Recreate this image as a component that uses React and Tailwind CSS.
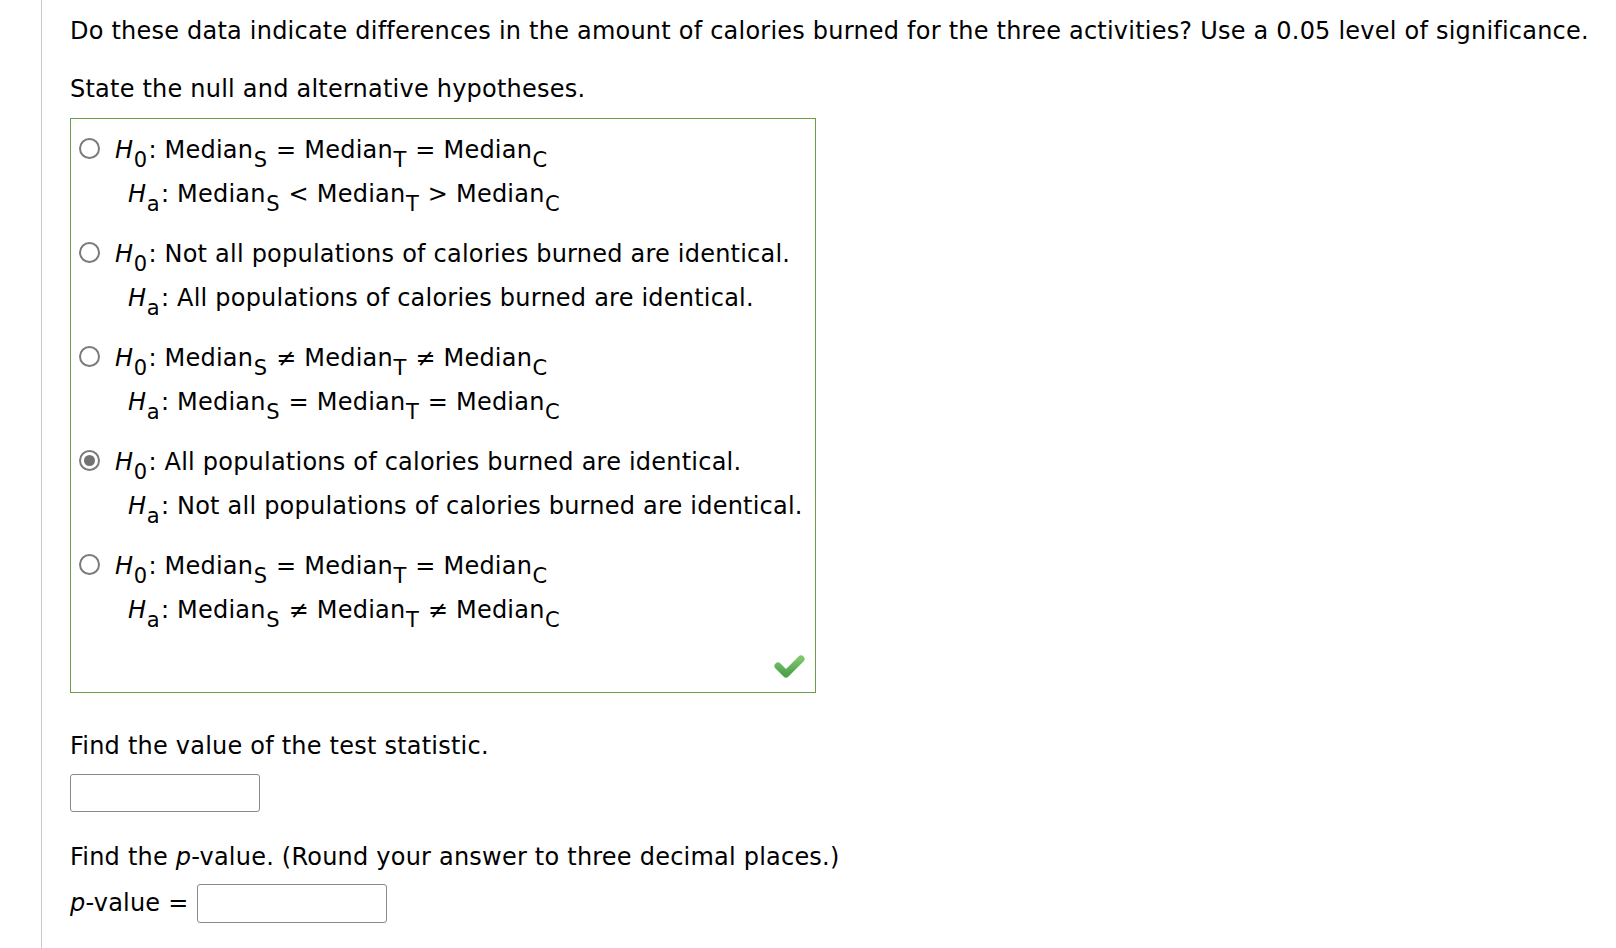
import React, { useState } from 'react';

const font = { fontFamily: '"DejaVu Sans", Verdana, sans-serif' };

// small helpers for the math bits
const Sub = ({ children }) => (
  <span className="relative top-[9px] text-[21px] leading-none ml-[0.5px] mr-[1px]">{children}</span>
);
const H0 = () => (
  <>
    <i>H</i>
    <Sub>0</Sub>:
  </>
);
const Ha = () => (
  <>
    <i>H</i>
    <Sub>a</Sub>:
  </>
);
const Med = ({ s }) => (
  <>
    Median<Sub>{s}</Sub>
  </>
);

const Radio = ({ checked }) => (
  <div className="mt-[2px] ml-[8px] w-[21px] h-[21px] shrink-0 rounded-full border-2 border-[#7b7b7b] bg-white flex items-center justify-center">
    {checked && <div className="w-[11px] h-[11px] rounded-full bg-[#737373]" />}
  </div>
);

const Option = ({ checked, onPick, h0, ha, first }) => (
  <div className={`flex items-start cursor-pointer ${first ? '' : 'mt-[31px]'}`} onClick={onPick}>
    <Radio checked={checked} />
    <div className="ml-[15px]">
      <div className="h-[29px] leading-[29px] whitespace-nowrap">{h0}</div>
      <div className="h-[29px] leading-[29px] mt-[15px] ml-[13px] whitespace-nowrap">{ha}</div>
    </div>
  </div>
);

const CheckMark = () => (
  <svg width="32" height="28" viewBox="0 0 32 28">
    <defs>
      <linearGradient id="gk" x1="0" y1="0" x2="0" y2="1">
        <stop offset="0" stopColor="#7cc56d" />
        <stop offset="1" stopColor="#4da24a" />
      </linearGradient>
    </defs>
    <polyline
      points="4,14 12,22 27,7"
      fill="none"
      stroke="url(#gk)"
      strokeWidth="7"
      strokeLinejoin="round"
      strokeLinecap="round"
    />
  </svg>
);

export default function App() {
  const [picked, setPicked] = useState(3);

  const options = [
    {
      h0: (
        <>
          <H0 /> <Med s="S" /> = <Med s="T" /> = <Med s="C" />
        </>
      ),
      ha: (
        <>
          <Ha /> <Med s="S" /> &lt; <Med s="T" /> &gt; <Med s="C" />
        </>
      ),
    },
    {
      h0: (
        <>
          <H0 /> Not all populations of calories burned are identical.
        </>
      ),
      ha: (
        <>
          <Ha /> All populations of calories burned are identical.
        </>
      ),
    },
    {
      h0: (
        <>
          <H0 /> <Med s="S" /> ≠ <Med s="T" /> ≠ <Med s="C" />
        </>
      ),
      ha: (
        <>
          <Ha /> <Med s="S" /> = <Med s="T" /> = <Med s="C" />
        </>
      ),
    },
    {
      h0: (
        <>
          <H0 /> All populations of calories burned are identical.
        </>
      ),
      ha: (
        <>
          <Ha /> Not all populations of calories burned are identical.
        </>
      ),
    },
    {
      h0: (
        <>
          <H0 /> <Med s="S" /> = <Med s="T" /> = <Med s="C" />
        </>
      ),
      ha: (
        <>
          <Ha /> <Med s="S" /> ≠ <Med s="T" /> ≠ <Med s="C" />
        </>
      ),
    },
  ];

  return (
    <div className="min-h-screen bg-white pl-[41px] text-black" style={font}>
      <div className="min-h-[948px] border-l border-[#c8c8c8] pl-[28px] pt-[17px] text-[24px] tracking-[0.22px]">
        <p className="leading-[29px] whitespace-nowrap">
          Do these data indicate differences in the amount of calories burned for the three activities? Use a 0.05 level of significance.
        </p>
        <p className="leading-[29px] mt-[29px]">State the null and alternative hypotheses.</p>

        <div className="mt-[14px] w-[746px] border border-[#6a9e46] pt-[17px] pr-[9px] pb-[12px]">
          {options.map((o, i) => (
            <Option
              key={i}
              first={i === 0}
              checked={picked === i}
              onPick={() => setPicked(i)}
              h0={o.h0}
              ha={o.ha}
            />
          ))}
          <div className="flex justify-end mt-[27px]">
            <CheckMark />
          </div>
        </div>

        <p className="leading-[29px] mt-[39px]">Find the value of the test statistic.</p>
        <input
          type="text"
          className="block mt-[13px] w-[190px] h-[38px] border border-[#8a8a8a] rounded-[3px] px-2 outline-none"
        />

        <p className="leading-[29px] mt-[31px]">
          Find the <i>p</i>-value. (Round your answer to three decimal places.)
        </p>
        <div className="flex items-center mt-[12px]">
          <span className="leading-[29px]">
            <i>p</i>-value =
          </span>
          <input
            type="text"
            className="ml-[8px] w-[190px] h-[39px] border border-[#8a8a8a] rounded-[3px] px-2 outline-none"
          />
        </div>
      </div>
    </div>
  );
}
